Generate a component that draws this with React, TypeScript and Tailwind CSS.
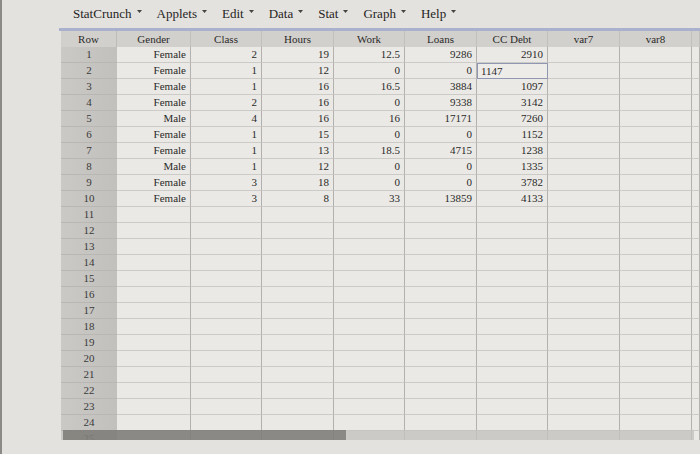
import React from 'react';

const menus = ['StatCrunch', 'Applets', 'Edit', 'Data', 'Stat', 'Graph', 'Help'];
const headers = ['Gender', 'Class', 'Hours', 'Work', 'Loans', 'CC Debt', 'var7', 'var8', ''];

const data: (string | number)[][] = [
  ['Female', 2, 19, 12.5, 9286, 2910],
  ['Female', 1, 12, 0, 0, 1147],
  ['Female', 1, 16, 16.5, 3884, 1097],
  ['Female', 2, 16, 0, 9338, 3142],
  ['Male', 4, 16, 16, 17171, 7260],
  ['Female', 1, 15, 0, 0, 1152],
  ['Female', 1, 13, 18.5, 4715, 1238],
  ['Male', 1, 12, 0, 0, 1335],
  ['Female', 3, 18, 0, 0, 3782],
  ['Female', 3, 8, 33, 13859, 4133],
];

const gridCols = 'grid grid-cols-[56px_74px_71px_72px_71px_72px_71px_72px_72px_1fr]';

function Caret() {
  return (
    <svg width="5" height="3" viewBox="0 0 5 3" className="ml-[5px] mt-[-5px]">
      <path d="M0 0 L5 0 L2.5 3 Z" fill="#444" />
    </svg>
  );
}

export default function App() {
  const rows = Array.from({ length: 25 }, (_, i) => i + 1);
  return (
    <div
      className="h-[454px] w-[700px] overflow-hidden border-l-[2px] border-[#8c8a86] bg-[#e4e2de] text-[#2a2a2a]"
      style={{ fontFamily: '"Liberation Serif", "Times New Roman", serif' }}
    >
      <nav className="flex h-[28px] items-center pl-[71px] text-[13px] text-[#1f1f1f]">
        {menus.map((m) => (
          <span key={m} className="mr-[15px] flex items-center">
            {m}
            <Caret />
          </span>
        ))}
      </nav>

      <div className="relative ml-[57px] h-[412px] overflow-hidden">
        <div className="h-[3px] bg-[#a9b1cc]" />
        <div className="pl-[2px]">
          <div className={`${gridCols} h-[16px] bg-[#d2d0cc] text-[11px] leading-[16px]`}>
            <div className="border-r border-[#bebcb8] text-center">Row</div>
            {headers.map((h, i) => (
              <div key={i} className="border-r border-[#c2c0bc] text-center">
                {h}
              </div>
            ))}
          </div>

          {rows.map((r) => {
            const d = data[r - 1];
            return (
              <div key={r} className={`${gridCols} h-[16px] text-[11px] leading-[15px]`}>
                <div className="border-b border-[#b9b7b3] bg-gradient-to-r from-[#cbc9c5] to-[#c2c0bc] text-center text-[#3a3a3a]">
                  {r}
                </div>
                {headers.map((_, c) => {
                  const v = d ? d[c] : undefined;
                  const editing = r === 2 && c === 5;
                  if (editing) {
                    return (
                      <div
                        key={c}
                        className="border border-[#8f97b3] bg-[#eeece9] pl-[3px] text-left leading-[14px]"
                      >
                        {v}
                      </div>
                    );
                  }
                  return (
                    <div
                      key={c}
                      className="border-r border-b border-r-[#b3b1ad] border-b-[#cdcbc7] bg-[#ebe9e5] pr-[4px] text-right"
                    >
                      {v !== undefined ? v : ''}
                    </div>
                  );
                })}
              </div>
            );
          })}
        </div>

        <div className="absolute bottom-0 left-[4px] flex h-[10px] w-[631px]">
          <div className="h-full w-[283px] bg-[#7f7e7a]/90" />
          <div className="h-full flex-1 bg-[#c4c2be]/80" />
        </div>
      </div>
    </div>
  );
}
